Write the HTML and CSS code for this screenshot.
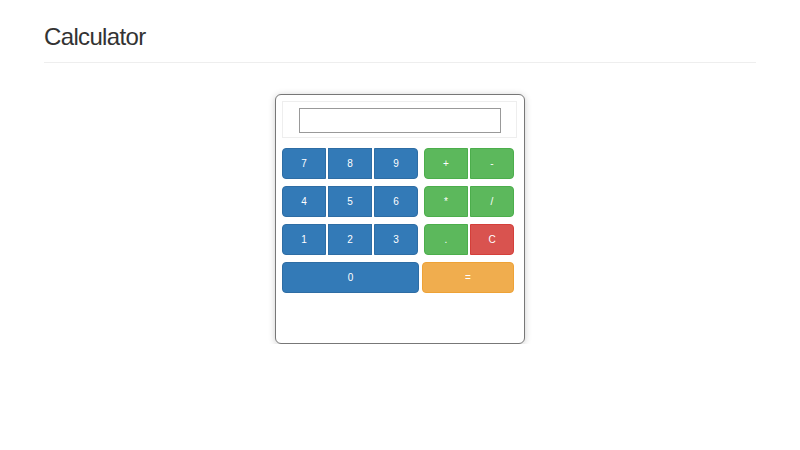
FILE: index.html
```html
<!DOCTYPE html>
<html>
<head>
<meta charset="utf-8">
<title>Calculator</title>
<link rel="stylesheet" href="styles.css">
</head>
<body>
<div class="container">
  <h1 class="title">Calculator</h1>
  <hr class="rule">
  <div class="calc">
    <div class="display">
      <input class="screen" type="text">
    </div>
    <div class="keys">
      <div class="row">
        <div class="group nums">
          <button class="btn blue">7</button>
          <button class="btn blue">8</button>
          <button class="btn blue">9</button>
        </div>
        <div class="group ops">
          <button class="btn green">+</button>
          <button class="btn green">-</button>
        </div>
      </div>
      <div class="row">
        <div class="group nums">
          <button class="btn blue">4</button>
          <button class="btn blue">5</button>
          <button class="btn blue">6</button>
        </div>
        <div class="group ops">
          <button class="btn green">*</button>
          <button class="btn green">/</button>
        </div>
      </div>
      <div class="row">
        <div class="group nums">
          <button class="btn blue">1</button>
          <button class="btn blue">2</button>
          <button class="btn blue">3</button>
        </div>
        <div class="group ops">
          <button class="btn green">.</button>
          <button class="btn red">C</button>
        </div>
      </div>
      <div class="row last">
        <button class="btn blue zero">0</button>
        <button class="btn orange equals">=</button>
      </div>
    </div>
  </div>
</div>
</body>
</html>
```
FILE: styles.css
```css
html, body {
  margin: 0;
  padding: 0;
  background: #fff;
}
body {
  font-family: "Liberation Sans", Arial, sans-serif;
  color: #333;
}
.container {
  padding: 0 44px;
}
.title {
  margin: 0;
  padding-top: 23px;
  font-size: 24px;
  font-weight: 400;
  line-height: 28px;
  letter-spacing: -0.65px;
  color: #333;
}
.rule {
  margin: 11px 0 0 0;
  border: 0;
  border-top: 1px solid #eee;
  height: 0;
}
.calc {
  width: 236px;
  height: 236px;
  margin: 31px auto 0 auto;
  padding: 6px;
  border: 1px solid #777;
  border-radius: 6px;
  box-shadow: 0 1px 7px rgba(0,0,0,0.2);
  background: #fff;
}
.display {
  width: 233px;
  height: 35px;
  border: 1px solid #eee;
  display: flex;
  align-items: center;
  justify-content: center;
}
.screen {
  width: 200px;
  height: 23px;
  padding: 0;
  margin: 1px 0 0 0;
  border: 1px solid #999;
  box-sizing: content-box;
  outline: none;
}
.keys {
  margin-top: 10px;
  display: flex;
  flex-direction: column;
  gap: 7px;
}
.row {
  display: flex;
  gap: 6px;
}
.row.last {
  gap: 3px;
}
.group {
  display: flex;
  gap: 2px;
}
.btn {
  width: 44px;
  height: 31px;
  padding: 0;
  margin: 0;
  border: 1px solid transparent;
  border-radius: 0;
  font-family: "Liberation Sans", Arial, sans-serif;
  font-size: 10px;
  color: #fff;
  box-sizing: border-box;
}
.group .btn:first-child {
  border-top-left-radius: 4px;
  border-bottom-left-radius: 4px;
}
.group .btn:last-child {
  border-top-right-radius: 4px;
  border-bottom-right-radius: 4px;
}
.blue {
  background: #337ab7;
  border-color: #2e6da4;
}
.green {
  background: #5cb85c;
  border-color: #4cae4c;
}
.red {
  background: #d9534f;
  border-color: #d43f3a;
}
.orange {
  background: #f0ad4e;
  border-color: #eea236;
}
.zero {
  width: 137px;
  border-radius: 4px;
}
.equals {
  width: 92px;
  border-radius: 4px;
}
```
